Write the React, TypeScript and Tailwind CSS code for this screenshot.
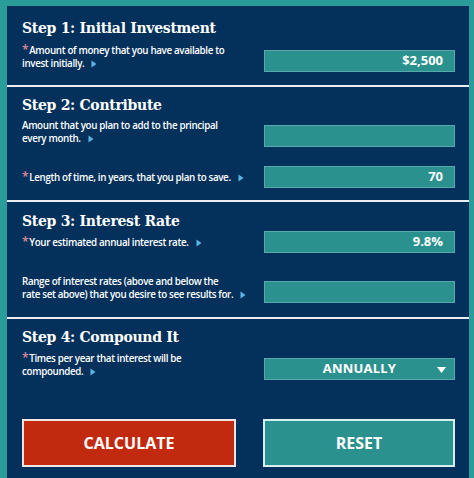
import React from "react";

const Tri = () => (
  <svg width="6" height="8" viewBox="0 0 6 8" className="inline-block ml-[7px] align-[-1px]">
    <path d="M0.5 0.5 L5.5 4 L0.5 7.5 Z" fill="#5bb6e6" />
  </svg>
);

const Star = () => <span className="text-[#e58a9a] text-[12px] leading-none mr-[1px]">*</span>;

const Field = ({ value, cls }: { value?: string; cls: string }) => (
  <div
    className={`w-[191px] h-[22px] bg-[#2b918e] border border-[#57a9ab] flex items-center justify-end pr-[11px] text-white font-bold text-[13px] ${cls}`}
  >
    {value}
  </div>
);

const Title = ({ children }: { children: React.ReactNode }) => (
  <div
    className="text-white font-bold text-[14px] leading-[20px] tracking-[-0.3px]"
    style={{ fontFamily: '"DejaVu Serif", serif' }}
  >
    {children}
  </div>
);

const Sep = () => <div className="h-[2px] bg-[#e8eef4]" />;

const lbl = "text-white text-[9.8px] font-semibold leading-[13px] tracking-[-0.35px] whitespace-nowrap";

export default function App() {
  return (
    <div
      className="w-[474px] h-[478px] bg-[#2a9d9a] pt-[6px] pl-[7px] pr-[5px] overflow-hidden"
      style={{ fontFamily: '"Open Sans", sans-serif' }}
    >
      <div className="bg-[#04315c] h-full flex flex-col">
        {/* Section 1 */}
        <div className="pl-[15px] pr-[14px] pt-[12px] pb-[13px]">
          <Title>Step 1: Initial Investment</Title>
          <div className="flex justify-between items-start">
            <div className={`mt-[6px] ${lbl}`}>
              <Star />Amount of money that you have available to
              <br />
              invest initially.<Tri />
            </div>
            <Field value="$2,500" cls="mt-[12px]" />
          </div>
        </div>
        <Sep />
        {/* Section 2 */}
        <div className="pl-[15px] pr-[14px] pt-[8px] pb-[12px]">
          <Title>Step 2: Contribute</Title>
          <div className="flex justify-between items-start">
            <div className={`mt-[4px] ${lbl}`}>
              Amount that you plan to add to the principal
              <br />
              every month.<Tri />
            </div>
            <Field cls="mt-[10px]" />
          </div>
          <div className="flex justify-between items-start">
            <div className={`mt-[24px] ${lbl}`}>
              <Star />Length of time, in years, that you plan to save.<Tri />
            </div>
            <Field value="70" cls="mt-[19px]" />
          </div>
        </div>
        <Sep />
        {/* Section 3 */}
        <div className="pl-[15px] pr-[14px] pt-[9px] pb-[14px]">
          <Title>Step 3: Interest Rate</Title>
          <div className="flex justify-between items-start">
            <div className={`mt-[5px] ${lbl}`}>
              <Star />Your estimated annual interest rate.<Tri />
            </div>
            <Field value="9.8%" cls="mt-[0px]" />
          </div>
          <div className="flex justify-between items-start">
            <div className={`mt-[22px] ${lbl}`}>
              Range of interest rates (above and below the
              <br />
              rate set above) that you desire to see results for.<Tri />
            </div>
            <Field cls="mt-[28px]" />
          </div>
        </div>
        <Sep />
        {/* Section 4 */}
        <div className="pl-[15px] pr-[14px] pt-[8px]">
          <Title>Step 4: Compound It</Title>
          <div className="flex justify-between items-start">
            <div className={`mt-[5px] ${lbl}`}>
              <Star />Times per year that interest will be
              <br />
              compounded.<Tri />
            </div>
            <div className="mt-[11px] w-[191px] h-[22px] bg-[#2b918e] border border-[#57a9ab] relative flex items-center justify-center text-white font-bold text-[13px] tracking-[0.2px]">
              ANNUALLY
              <svg width="9" height="6" viewBox="0 0 9 6" className="absolute right-[8px] top-[8px]">
                <path d="M0 0 L9 0 L4.5 6 Z" fill="#ffffff" />
              </svg>
            </div>
          </div>
          <div className="flex justify-between mt-[39px]">
            <button className="w-[214px] h-[48px] bg-[#c22a10] border-2 border-[#f3e6e2] text-white font-bold text-[16px]">
              CALCULATE
            </button>
            <button className="w-[192px] h-[48px] bg-[#2b918e] border-2 border-[#d4f1f1] text-white font-bold text-[16px]">
              RESET
            </button>
          </div>
        </div>
      </div>
    </div>
  );
}
